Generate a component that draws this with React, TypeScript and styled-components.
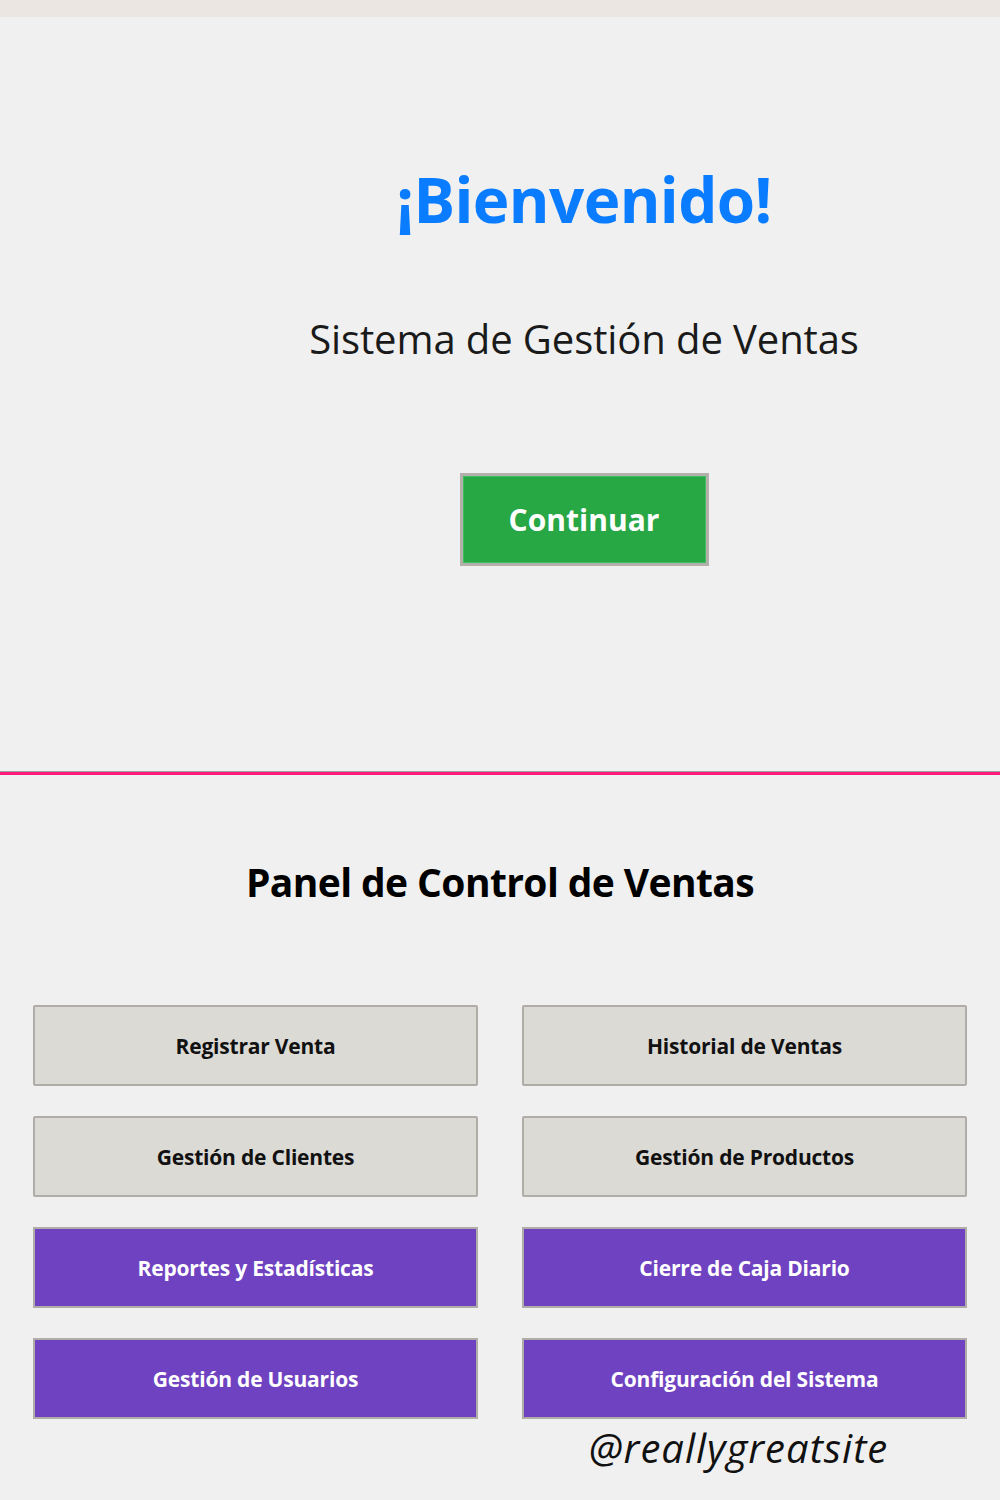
import styled, { createGlobalStyle } from "styled-components";

const GlobalStyle = createGlobalStyle`
  html, body {
    margin: 0;
    padding: 0;
    background: #f0f0f0;
  }
  body {
    font-family: "Open Sans", "Noto Sans", sans-serif;
  }
`;

type Tone = "plain" | "accent";

interface MenuItem {
  label: string;
  tone: Tone;
}

const MENU: MenuItem[] = [
  { label: "Registrar Venta", tone: "plain" },
  { label: "Historial de Ventas", tone: "plain" },
  { label: "Gestión de Clientes", tone: "plain" },
  { label: "Gestión de Productos", tone: "plain" },
  { label: "Reportes y Estadísticas", tone: "accent" },
  { label: "Cierre de Caja Diario", tone: "accent" },
  { label: "Gestión de Usuarios", tone: "accent" },
  { label: "Configuración del Sistema", tone: "accent" },
];

export default function App() {
  return (
    <Page>
      <GlobalStyle />
      <TopStrip />
      <Welcome>
        <Title>¡Bienvenido!</Title>
        <Subtitle>Sistema de Gestión de Ventas</Subtitle>
        <ContinueButton>Continuar</ContinueButton>
      </Welcome>
      <Divider />
      <Panel>
        <PanelTitle>Panel de Control de Ventas</PanelTitle>
        <MenuGrid>
          {MENU.map((item) => (
            <MenuButton key={item.label} tone={item.tone}>
              {item.label}
            </MenuButton>
          ))}
        </MenuGrid>
        <Footer>
          <Handle>@reallygreatsite</Handle>
        </Footer>
      </Panel>
    </Page>
  );
}

const Page = styled.div`
  width: 1000px;
  height: 1500px;
  background: #f0f0f0;
  overflow: hidden;
`;

const TopStrip = styled.div`
  height: 17px;
  background: #ebe6e1;
`;

const Welcome = styled.section`
  height: 754px;
  box-sizing: border-box;
  padding: 142px 0 0 168px;
  display: flex;
  flex-direction: column;
  align-items: center;
`;

const Title = styled.h1`
  margin: 0;
  font-size: 62px;
  line-height: 80px;
  font-weight: 700;
  color: #0a7cff;
  letter-spacing: -0.6px;
`;

const Subtitle = styled.p`
  margin: 74px 0 0;
  font-size: 40px;
  line-height: 52px;
  font-weight: 400;
  color: #1a1a1a;
  letter-spacing: -0.1px;
`;

const ContinueButton = styled.button`
  margin-top: 108px;
  width: 249px;
  height: 93px;
  box-sizing: border-box;
  background: #28a745;
  border: 3px solid #b3afab;
  outline: 1px solid #3fbf5c;
  outline-offset: -4px;
  color: #ffffff;
  font-family: "Open Sans", "Noto Sans", sans-serif;
  font-size: 30px;
  font-weight: 700;
  cursor: pointer;
`;

const Divider = styled.div`
  height: 3px;
  border-top: 1px solid #a0a0a0;
  background: #ff1a7d;
`;

const Panel = styled.section`
  padding: 81px 33px 0;
`;

const PanelTitle = styled.h2`
  margin: 0;
  text-align: center;
  font-size: 39px;
  line-height: 52px;
  font-weight: 700;
  color: #000000;
  letter-spacing: -0.6px;
`;

const MenuGrid = styled.div`
  margin-top: 97px;
  display: grid;
  grid-template-columns: 1fr 1fr;
  column-gap: 44px;
  row-gap: 30px;
`;

const MenuButton = styled.button<{ tone: Tone }>`
  height: 81px;
  box-sizing: border-box;
  background: ${(p) => (p.tone === "accent" ? "#6f42c1" : "#dcdad5")};
  border: 2px solid #b0aca8;
  border-radius: ${(p) => (p.tone === "accent" ? "0" : "2px")};
  color: ${(p) => (p.tone === "accent" ? "#ffffff" : "#111111")};
  font-family: "Open Sans", "Noto Sans", sans-serif;
  font-size: 21px;
  font-weight: 700;
  letter-spacing: -0.2px;
  cursor: pointer;
`;

const Footer = styled.div`
  display: grid;
  grid-template-columns: 1fr 1fr;
  column-gap: 44px;
`;

const Handle = styled.div`
  grid-column: 2;
  padding-right: 12px;
  text-align: center;
  font-family: "Open Sans", "Noto Sans", sans-serif;
  font-style: italic;
  font-size: 40px;
  line-height: 58px;
  color: #111111;
  letter-spacing: 1px;
`;
